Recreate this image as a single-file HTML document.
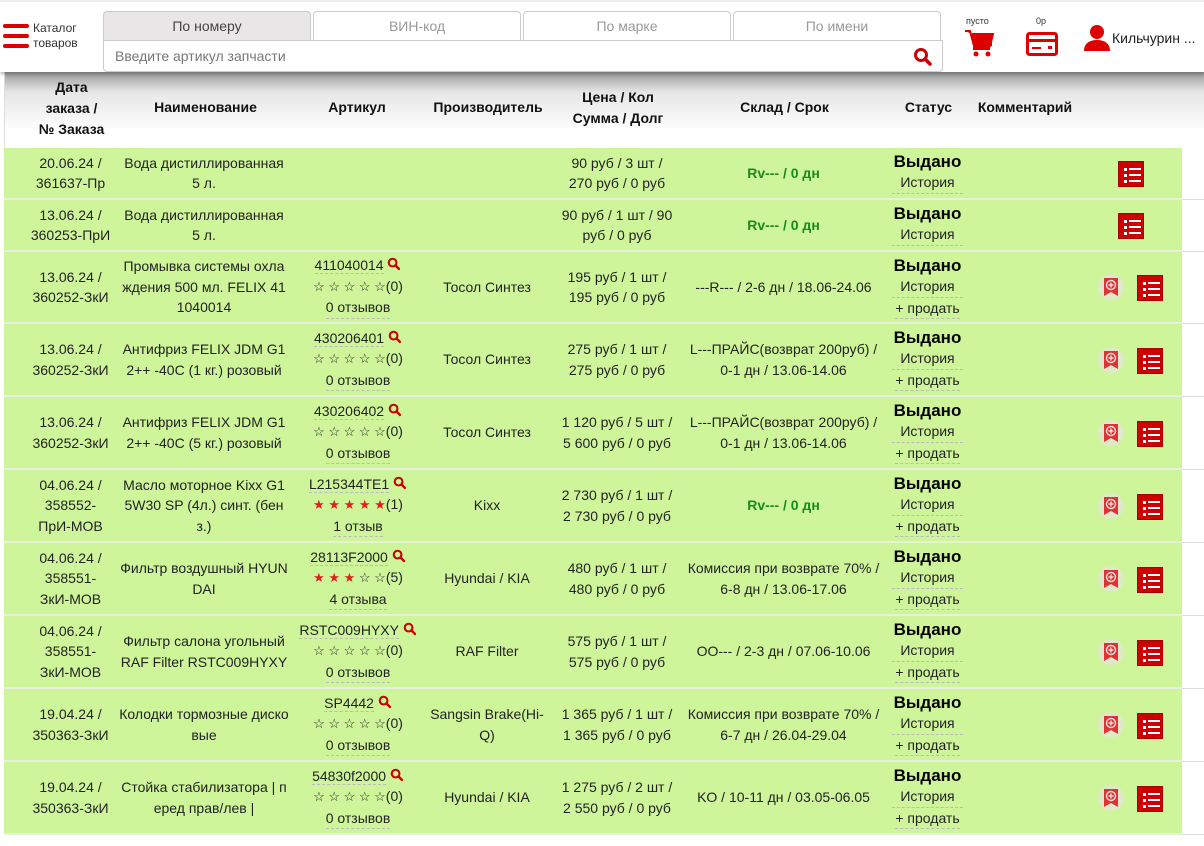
<!DOCTYPE html><html><head><meta charset="utf-8"><style>
*{box-sizing:border-box;margin:0;padding:0}
body{width:1204px;height:846px;background:#fff;font-family:"Liberation Sans",sans-serif;font-size:14px;color:#222;position:relative;overflow:hidden}
.top{position:absolute;left:0;top:0;width:1204px;height:72px;background:#fff;border-top:2px solid #eee;box-shadow:0 2px 4px rgba(0,0,0,.3);z-index:2}
.tabs{position:absolute;left:103px;top:9px;width:840px;height:62px}
.tab{position:absolute;top:0;height:30px;width:208px;border:1px solid #ccc;border-bottom:none;border-radius:4px 4px 0 0;text-align:center;line-height:28px;color:#999;font-size:14px}
.inp{position:absolute;left:0;top:29px;width:840px;height:32px;border:1px solid #ccc;border-radius:0 0 4px 4px;padding-left:11px;line-height:30px;color:#777}
.hdr{position:absolute;left:4px;top:72px;width:1200px;height:76px;background:linear-gradient(#9a9a9a 0,#e6e6e6 20px,#fff 60px);border-left:1px solid #ddd}
.h{position:absolute;font-weight:bold;text-align:center;line-height:21px;color:#111}
.row{position:absolute;left:4px;width:1178px;background:#cff59b;border-bottom:2px solid #e8f0e0}
.rw{position:absolute;left:1182px;width:22px;border-bottom:1px solid #ddd;background:#fff}
.c{position:absolute;top:0;bottom:0;display:flex;flex-direction:column;justify-content:center;align-items:center;text-align:center;line-height:20.5px}
.u{border-bottom:1px dashed #bbb}
.st{font-size:17px;font-weight:bold;color:#000;line-height:21px}
.g{color:#1a8a1a;font-weight:bold}
.r{color:#e02020}
.ls{position:absolute;width:26px;height:26px;background:#cc0000;border:1px solid #a00}
.ls i{position:absolute;left:5px;width:3px;height:3px;background:#fff}
.ls b{position:absolute;left:10px;width:12px;height:2px;background:#fff}
.bm{position:absolute;width:26px;height:26px;border-radius:50%;background:#dfe8c8}
</style></head><body>
<div class="top">
 <div style="position:absolute;left:3px;top:22px;width:26px;height:4px;background:#d00;border-radius:2px"></div>
 <div style="position:absolute;left:3px;top:32px;width:26px;height:4px;background:#d00;border-radius:2px"></div>
 <div style="position:absolute;left:3px;top:42px;width:26px;height:4px;background:#d00;border-radius:2px"></div>
 <div style="position:absolute;left:33px;top:19px;font-size:12px;line-height:15px;color:#333">Каталог<br>товаров</div>
 <div class="tabs">
  <div class="tab" style="left:0;background:#e8e6e6;color:#444">По номеру</div>
  <div class="tab" style="left:210px">ВИН-код</div>
  <div class="tab" style="left:420px">По марке</div>
  <div class="tab" style="left:630px">По имени</div>
  <div class="inp">Введите артикул запчасти</div>
  <svg style="position:absolute;left:810px;top:36px" width="20" height="20" viewBox="0 0 20 20"><circle cx="8" cy="8" r="5.5" fill="none" stroke="#c00" stroke-width="3"/><path d="M12 12l5 5" stroke="#c00" stroke-width="3.5" stroke-linecap="round"/></svg>
 </div>
 <div style="position:absolute;left:966px;top:14px;font-size:9px;color:#333">пусто</div>
 <svg style="position:absolute;left:964px;top:26px" width="32" height="30" viewBox="0 0 32 30"><path d="M1 3h5l4 15h16l3-12H8" fill="#d00" stroke="#d00" stroke-width="2"/><rect x="9" y="6" width="19" height="12" fill="#d00"/><rect x="9" y="19" width="17" height="3" fill="#d00"/><circle cx="12" cy="26" r="2.5" fill="#d00"/><circle cx="24" cy="26" r="2.5" fill="#d00"/></svg>
 <div style="position:absolute;left:1036px;top:14px;font-size:9px;color:#333">0р</div>
 <svg style="position:absolute;left:1026px;top:30px" width="32" height="24" viewBox="0 0 32 24"><rect x="1.5" y="1.5" width="29" height="21" rx="2" fill="none" stroke="#d00" stroke-width="3"/><rect x="1" y="7" width="30" height="3" fill="#d00"/><rect x="6" y="15" width="9" height="2" fill="#d00"/><rect x="22" y="14" width="4" height="3" fill="#d00"/></svg>
 <svg style="position:absolute;left:1083px;top:22px" width="28" height="28" viewBox="0 0 28 28"><circle cx="14" cy="8" r="7" fill="#d00"/><path d="M1 27c0-8 6-11 13-11s13 3 13 11z" fill="#d00"/></svg>
 <div style="position:absolute;left:1112px;top:28px;font-size:14px;color:#222">Кильчурин ...</div>
</div>
<div class="hdr">
 <div class="h" style="left:0;width:133px;top:5px">Дата<br>заказа /<br>№ Заказа</div>
 <div class="h" style="left:133px;width:135px;top:25px">Наименование</div>
 <div class="h" style="left:292px;width:120px;top:25px">Артикул</div>
 <div class="h" style="left:418px;width:130px;top:25px">Производитель</div>
 <div class="h" style="left:548px;width:130px;top:15px">Цена / Кол<br>Сумма / Долг</div>
 <div class="h" style="left:678px;width:203px;top:25px">Склад / Срок</div>
 <div class="h" style="left:881px;width:85px;top:25px">Статус</div>
 <div class="h" style="left:966px;width:108px;top:25px">Комментарий</div>
</div>
<div id="rows"></div>
<script>
var R=[
[148,52,"20.06.24 /<br>361637-Пр","Вода дистиллированная<br>5 л.",null,"","90 руб / 3 шт /<br>270 руб / 0 руб",'<span class="g">Rv--- / 0 дн</span>',0],
[200,52,"13.06.24 /<br>360253-ПрИ","Вода дистиллированная<br>5 л.",null,"","90 руб / 1 шт / 90<br>руб / 0 руб",'<span class="g">Rv--- / 0 дн</span>',0],
[252,72,"13.06.24 /<br>360252-ЗкИ","Промывка системы охла<br>ждения 500 мл. FELIX 41<br>1040014",["411040014",0,"0 отзывов"],"Тосол Синтез","195 руб / 1 шт /<br>195 руб / 0 руб","---R--- / 2-6 дн / 18.06-24.06",1],
[324,73,"13.06.24 /<br>360252-ЗкИ","Антифриз FELIX JDM G1<br>2++ -40C (1 кг.) розовый",["430206401",0,"0 отзывов"],"Тосол Синтез","275 руб / 1 шт /<br>275 руб / 0 руб","L---ПРАЙС(возврат 200руб) /<br>0-1 дн / 13.06-14.06",1],
[397,73,"13.06.24 /<br>360252-ЗкИ","Антифриз FELIX JDM G1<br>2++ -40C (5 кг.) розовый",["430206402",0,"0 отзывов"],"Тосол Синтез","1 120 руб / 5 шт /<br>5 600 руб / 0 руб","L---ПРАЙС(возврат 200руб) /<br>0-1 дн / 13.06-14.06",1],
[470,73,"04.06.24 /<br>358552-<br>ПрИ-МОВ","Масло моторное Kixx G1<br>5W30 SP (4л.) синт. (бен<br>з.)",["L215344TE1",5,"1 отзыв","(1)"],"Kixx","2 730 руб / 1 шт /<br>2 730 руб / 0 руб",'<span class="g">Rv--- / 0 дн</span>',1],
[543,73,"04.06.24 /<br>358551-<br>ЗкИ-МОВ","Фильтр воздушный HYUN<br>DAI",["28113F2000",3,"4 отзыва","(5)"],"Hyundai / KIA","480 руб / 1 шт /<br>480 руб / 0 руб","Комиссия при возврате 70% /<br>6-8 дн / 13.06-17.06",1],
[616,73,"04.06.24 /<br>358551-<br>ЗкИ-МОВ","Фильтр салона угольный<br>RAF Filter RSTC009HYXY",["RSTC009HYXY",0,"0 отзывов"],"RAF Filter","575 руб / 1 шт /<br>575 руб / 0 руб","OO--- / 2-3 дн / 07.06-10.06",1],
[689,73,"19.04.24 /<br>350363-ЗкИ","Колодки тормозные диско<br>вые",["SP4442",0,"0 отзывов"],"Sangsin Brake(Hi-<br>Q)","1 365 руб / 1 шт /<br>1 365 руб / 0 руб","Комиссия при возврате 70% /<br>6-7 дн / 26.04-29.04",1],
[762,73,"19.04.24 /<br>350363-ЗкИ","Стойка стабилизатора | п<br>еред прав/лев |",["54830f2000",0,"0 отзывов"],"Hyundai / KIA","1 275 руб / 2 шт /<br>2 550 руб / 0 руб","KO / 10-11 дн / 03.05-06.05",1]];
var h="";
R.forEach(function(r){
 var t=r[0],H=r[1];
 h+='<div class="row" style="top:'+t+'px;height:'+H+'px">';
 h+='<div class="c" style="left:0;width:133px">'+r[2]+'</div>';
 h+='<div class="c" style="left:105px;width:190px">'+r[3]+'</div>';
 if(r[4]){var a=r[4],s="";for(var i=0;i<5;i++)s+=(i<a[1]?'<span class="r">★</span>':'☆')+(i<4?' ':'');
  h+='<div class="c" style="left:279px;width:150px"><span><span class="u">'+a[0]+'</span> <svg width="14" height="14" viewBox="0 0 20 20" style="vertical-align:-1px"><circle cx="8" cy="8" r="5.5" fill="none" stroke="#c00" stroke-width="3"/><path d="M12 12l5 5" stroke="#c00" stroke-width="3.5" stroke-linecap="round"/></svg></span><span style="font-size:13px">'+s+'<span style="font-size:14px">'+(a[3]||"(0)")+'</span></span><span class="u">'+a[2]+'</span></div>';}
 h+='<div class="c" style="left:418px;width:130px">'+r[5]+'</div>';
 h+='<div class="c" style="left:548px;width:130px">'+r[6]+'</div>';
 h+='<div class="c" style="left:676px;width:207px">'+r[7]+'</div>';
 h+='<div class="c" style="left:881px;width:85px;justify-content:flex-start;padding-top:3px"><span class="st">Выдано</span><span class="u" style="padding:0 8px">История</span>'+(r[8]?'<span class="u">+ продать</span>':'')+'</div>';
 var cy=Math.round(H/2);
 if(r[8]){h+='<div class="bm" style="left:1094px;top:'+(cy-14)+'px"><svg width="26" height="26" viewBox="0 0 26 26"><path d="M6 4h14v18l-7-4-7 4z" fill="#d33"/><circle cx="13" cy="11" r="4.5" fill="none" stroke="#fdd" stroke-width="1.4"/><path d="M13 8.5v5M10.5 11h5" stroke="#fdd" stroke-width="1.4"/></svg></div>';
  h+='<div class="ls" style="left:1133px;top:'+(cy-13)+'px"><i style="top:6px"></i><b style="top:6px"></b><i style="top:12px"></i><b style="top:12px"></b><i style="top:18px"></i><b style="top:18px"></b></div>';}
 else h+='<div class="ls" style="left:1114px;top:'+(cy-13)+'px"><i style="top:6px"></i><b style="top:6px"></b><i style="top:12px"></i><b style="top:12px"></b><i style="top:18px"></i><b style="top:18px"></b></div>';
 h+='</div><div class="rw" style="top:'+t+'px;height:'+H+'px"></div>';
});
document.getElementById("rows").innerHTML=h;
</script>
</body></html>
